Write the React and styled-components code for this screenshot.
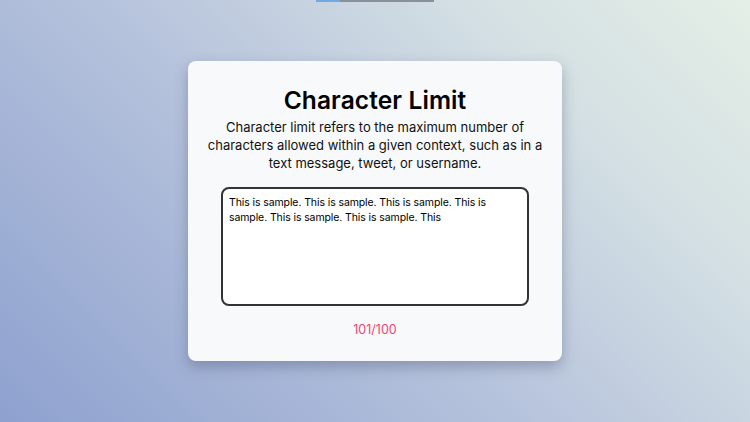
import React, { useEffect, useRef, useState } from "react";
import styled, { createGlobalStyle } from "styled-components";

const Global = createGlobalStyle`
  * { box-sizing: border-box; }
  html, body { margin: 0; padding: 0; height: 100%; }
  body { font-family: "Inter", "Noto Sans", sans-serif; }
  #root { height: 100%; }
`;

const Page = styled.div`
  position: relative;
  width: 100%;
  height: 100vh;
  display: flex;
  align-items: center;
  justify-content: center;
  background: linear-gradient(45deg, #8ea1cf 0%, #b6c3dc 45%, #d3dfe3 75%, #e4efe6 100%);
`;

const TopTrack = styled.div`
  position: absolute;
  top: 0;
  left: 316px;
  width: 118px;
  height: 2px;
  background: #8a9099;
  display: flex;
`;

const TopFill = styled.div`
  height: 100%;
  background: #6fa9e6;
`;

const Card = styled.div`
  width: 374px;
  height: 300px;
  background: #f8f9fb;
  border-radius: 8px;
  box-shadow: 0 6px 14px rgba(60, 70, 100, 0.35);
  display: flex;
  flex-direction: column;
  align-items: center;
  padding: 24px 0 0;
`;

const Title = styled.h1`
  margin: 0;
  font-size: 24.5px;
  line-height: 30px;
  font-weight: 600;
  color: #000;
  letter-spacing: 0.1px;
`;

const Desc = styled.p`
  margin: 3px 0 0;
  width: 344px;
  text-align: center;
  font-size: 13px;
  line-height: 18px;
  color: #111;
`;

const Area = styled.textarea`
  margin-top: 15px;
  width: 308px;
  height: 119px;
  border: 2px solid #333;
  border-radius: 8px;
  background: #fff;
  padding: 6px 6px;
  font-family: "Inter", "Noto Sans", sans-serif;
  font-size: 10.5px;
  line-height: 15px;
  letter-spacing: -0.1px;
  color: #000;
  resize: none;
  outline: none;
  caret-color: #000;
`;

const Counter = styled.div`
  margin-top: 16px;
  font-size: 12.5px;
  color: ${(p) => (p.$over ? "#fa3f6c" : "#333")};
`;

export default function App() {
  const [text, setText] = useState(
    "This is sample. This is sample. This is sample. This is sample. This is sample. This is sample. This"
  );
  const ref = useRef(null);
  useEffect(() => {
    if (ref.current) {
      ref.current.focus();
      const n = ref.current.value.length;
      ref.current.setSelectionRange(n, n);
    }
  }, []);
  const limit = 100;
  const count = text.length + 1;
  return (
    <>
      <Global />
      <Page>
        <TopTrack>
          <TopFill style={{ width: "24px" }} />
        </TopTrack>
        <Card>
          <Title>Character Limit</Title>
          <Desc>
            Character limit refers to the maximum number of characters allowed within a given
            context, such as in a text message, tweet, or username.
          </Desc>
          <Area ref={ref} value={text} onChange={(e) => setText(e.target.value)} spellCheck={false} />
          <Counter $over={count > limit}>
            {count}/{limit}
          </Counter>
        </Card>
      </Page>
    </>
  );
}
